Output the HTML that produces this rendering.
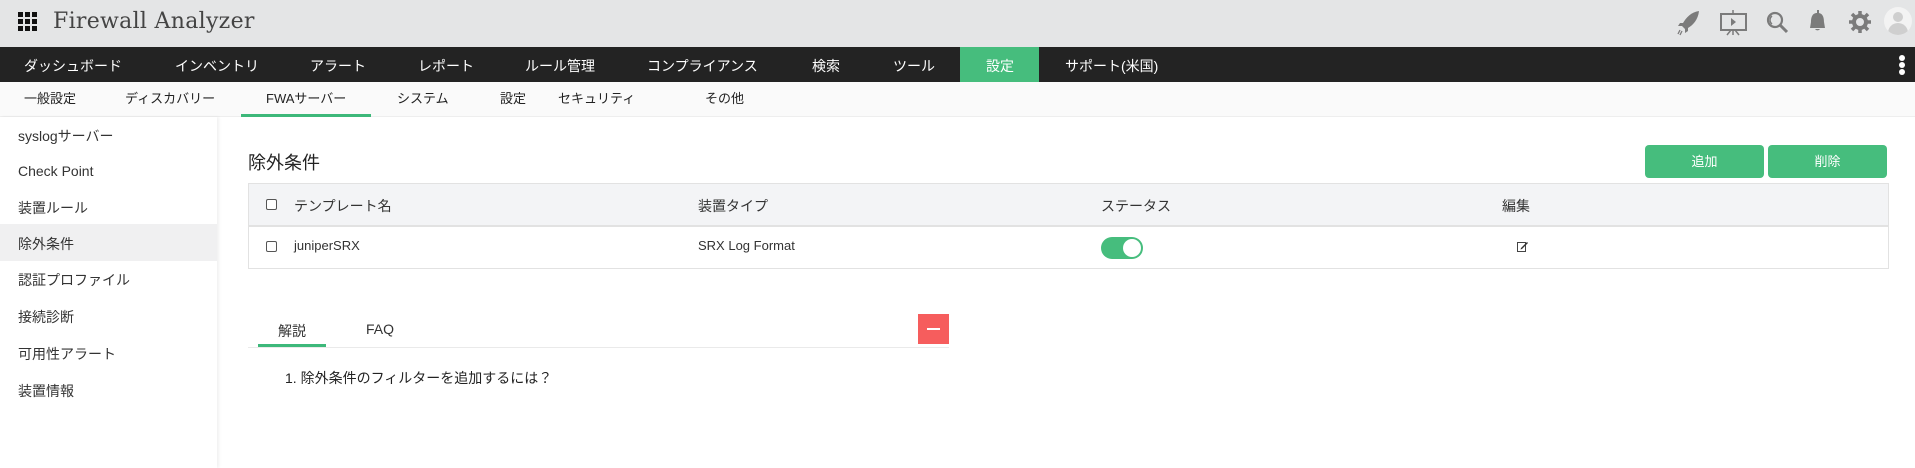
<!DOCTYPE html>
<html><head><meta charset="utf-8"><style>
*{margin:0;padding:0;box-sizing:border-box}
body{width:1915px;height:468px;overflow:hidden;background:#fff;font-family:"Liberation Sans","Noto Sans CJK JP",sans-serif;color:#333;position:relative}
.abs{position:absolute}
#hdr{left:0;top:0;width:1915px;height:47px;background:#e4e5e6}
#title{left:53px;top:9px;font-family:"DejaVu Serif","Liberation Serif",serif;font-size:22px;color:#444;font-weight:300;letter-spacing:0.3px}
#nav{left:0;top:47px;width:1915px;height:35px;background:#232323}
#nav span{position:absolute;top:9px;color:#fff;font-size:14px}
#sub{left:0;top:82px;width:1915px;height:35px;background:#fafafa;border-bottom:1px solid #eee}
#sub span{position:absolute;top:6px;color:#222;font-size:13px}
#side{left:0;top:117px;width:217px;height:351px;background:#fff;box-shadow:2px 0 3px rgba(0,0,0,0.06)}
.si{position:absolute;left:18px;font-size:14px;color:#333}
.btn{background:#46bd7d;color:#fff;font-size:13px;text-align:center;line-height:33px;border-radius:4px;height:33px;width:119px;top:145px}
#tbl{left:248px;top:183px;width:1641px;height:86px;border:1px solid #e2e2e2}
#th{left:0;top:0;width:100%;height:43px;background:#f3f4f6;border-bottom:2px solid #e2e2e2}
.cb{width:11px;height:11px;border:1px solid #555;border-radius:2px;background:#fff}
.t{font-size:14px;color:#333}
</style></head><body>
<div id="hdr" class="abs"></div>
<svg class="abs" style="left:18px;top:12px" width="19" height="19"><g fill="#111"><rect x="0" y="0" width="5" height="5"/><rect x="7" y="0" width="5" height="5"/><rect x="14" y="0" width="5" height="5"/><rect x="0" y="7" width="5" height="5"/><rect x="7" y="7" width="5" height="5"/><rect x="14" y="7" width="5" height="5"/><rect x="0" y="14" width="5" height="5"/><rect x="7" y="14" width="5" height="5"/><rect x="14" y="14" width="5" height="5"/></g></svg>
<div id="title" class="abs">Firewall Analyzer</div>
<svg class="abs" style="left:1677px;top:10px" width="240" height="26" fill="#7b7b7b" stroke="#7b7b7b">
<path d="M22 1 C14 2 9 8 6 13 L3 13 L1 16 L5 16 L8 19 L8 23 L11 21 L11 18 C16 15 21 10 22 1Z" stroke="none"/>
<path d="M3 20 L1 24 M5 21 L3 25" stroke-width="1.3" fill="none"/>
<rect x="44" y="4" width="25" height="16" fill="none" stroke-width="2"/><path d="M54 8 L59 12 L54 16Z" stroke="none"/><path d="M56 0 V4 M56 20 V25 M50 25 L54 20 M62 25 L58 20" stroke-width="1.5" fill="none"/>
<circle cx="98" cy="10" r="7" fill="none" stroke-width="2.2"/><path d="M103 15 L110 22" stroke-width="3" fill="none"/><path d="M95 6 A5 5 0 0 0 95 14" stroke-width="1.5" fill="none"/>
<path d="M140 3 C135 3 134 8 134 12 L133 18 L148 18 L147 12 C147 8 146 3 141 3Z M138 19 A3 3 0 0 0 143 19Z" stroke="none"/><rect x="140" y="0" width="2" height="3" stroke="none"/>
<circle cx="183" cy="12" r="6" fill="none" stroke-width="4"/><g stroke-width="3.5"><path d="M183 1 V5 M183 19 V23 M172 12 H176 M190 12 H194 M175 4 L178 7 M188 17 L191 20 M175 20 L178 17 M188 7 L191 4"/></g>
</svg>
<div class="abs" style="left:1884px;top:7px;width:28px;height:28px;border-radius:50%;background:#f3f3f3;overflow:hidden"><div class="abs" style="left:9px;top:5px;width:10px;height:10px;border-radius:50%;background:#cfcfcf"></div><div class="abs" style="left:4px;top:16px;width:20px;height:14px;border-radius:10px 10px 0 0;background:#cfcfcf"></div></div>
<div id="nav" class="abs">
<span style="left:24px">ダッシュボード</span><span style="left:175px">インベントリ</span><span style="left:310px">アラート</span><span style="left:418px">レポート</span><span style="left:525px">ルール管理</span><span style="left:647px">コンプライアンス</span><span style="left:812px">検索</span><span style="left:893px">ツール</span>
<div class="abs" style="left:960px;top:0;width:79px;height:35px;background:#46bd7d"></div><span style="left:986px">設定</span>
<span style="left:1065px">サポート(米国)</span>
<div class="abs" style="left:1899px;top:8px;width:6px;height:6px;border-radius:50%;background:#fff"></div><div class="abs" style="left:1899px;top:15px;width:6px;height:6px;border-radius:50%;background:#fff"></div><div class="abs" style="left:1899px;top:22px;width:6px;height:6px;border-radius:50%;background:#fff"></div>
</div>
<div id="sub" class="abs">
<span style="left:24px">一般設定</span><span style="left:125px">ディスカバリー</span><span style="left:266px">FWAサーバー</span><span style="left:397px">システム</span><span style="left:500px">設定</span><span style="left:558px">セキュリティ</span><span style="left:705px">その他</span>
<div class="abs" style="left:241px;top:32px;width:130px;height:3px;background:#3db87a"></div>
</div>
<div id="side" class="abs">
<div class="abs" style="left:0;top:107px;width:217px;height:37px;background:#f0f0f1"></div>
<div class="si" style="top:9px">syslogサーバー</div>
<div class="si" style="top:46px">Check Point</div>
<div class="si" style="top:81px">装置ルール</div>
<div class="si" style="top:117px">除外条件</div>
<div class="si" style="top:153px">認証プロファイル</div>
<div class="si" style="top:190px">接続診断</div>
<div class="si" style="top:227px">可用性アラート</div>
<div class="si" style="top:264px">装置情報</div>
</div>
<div class="abs" style="left:248px;top:149px;font-size:18px;color:#222">除外条件</div>
<div class="abs btn" style="left:1645px">追加</div>
<div class="abs btn" style="left:1768px">削除</div>
<div id="tbl" class="abs">
<div id="th" class="abs"></div>
<div class="abs cb" style="left:17px;top:15px"></div>
<div class="abs t" style="left:45px;top:12px">テンプレート名</div>
<div class="abs t" style="left:449px;top:12px">装置タイプ</div>
<div class="abs t" style="left:852px;top:12px">ステータス</div>
<div class="abs t" style="left:1253px;top:12px">編集</div>
<div class="abs cb" style="left:17px;top:57px"></div>
<div class="abs" style="left:45px;top:54px;font-size:13px">juniperSRX</div>
<div class="abs" style="left:449px;top:54px;font-size:13px">SRX Log Format</div>
<div class="abs" style="left:852px;top:53px;width:42px;height:22px;border-radius:11px;background:#46bd7d"><div class="abs" style="left:22px;top:2px;width:18px;height:18px;border-radius:50%;background:#fff"></div></div>
<svg class="abs" style="left:1268px;top:57px" width="12" height="11"><rect x="0.5" y="1.5" width="8" height="9" fill="none" stroke="#444"/><path d="M4 7 L10 1 L11 2 L5 8 L3.5 8.5Z" fill="#333"/></svg>
</div>
<div class="abs" style="left:248px;top:347px;width:701px;height:1px;background:#eaeaea"></div>
<div class="abs" style="left:278px;top:321px;font-size:14px">解説</div>
<div class="abs" style="left:366px;top:321px;font-size:14px">FAQ</div>
<div class="abs" style="left:258px;top:344px;width:68px;height:3px;background:#3db87a"></div>
<div class="abs" style="left:918px;top:314px;width:31px;height:30px;background:#f65d5d"><div class="abs" style="left:9px;top:14px;width:13px;height:2px;background:#fff"></div></div>
<div class="abs" style="left:285px;top:368px;font-size:14px;color:#222">1. 除外条件のフィルターを追加するには？</div>
</body></html>
